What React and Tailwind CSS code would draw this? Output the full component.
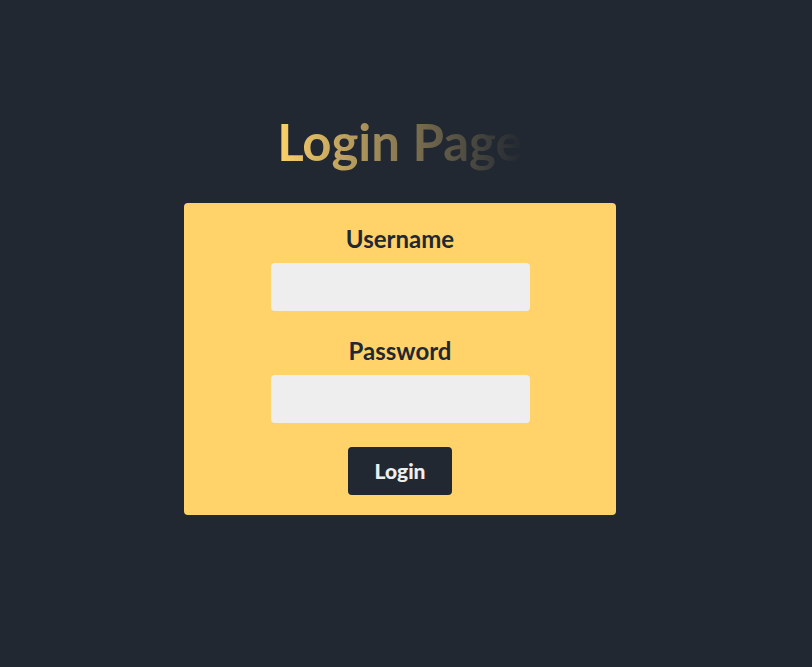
export default function App() {
    return (
        <div className="min-h-screen bg-[#222831] flex flex-col items-center pt-[111px] pr-[12px] font-['Lato','Open_Sans',sans-serif]">
            {/* Heading with fading gradient text */}
            <h1 className="inline-block text-[51px] leading-[62px] font-bold bg-gradient-to-r from-[#FFD369] to-[#222831] bg-clip-text text-transparent">
                Login Page
            </h1>

            <form
                onSubmit={(e) => e.preventDefault()}
                className="mt-[30px] w-[432px] bg-[#FFD369] rounded-[4px] flex flex-col items-center pt-[21px] pb-[20px]"
            >
                <label
                    htmlFor="username"
                    className="text-[24px] leading-[29px] font-bold text-[#222831]"
                >
                    Username
                </label>
                <input
                    id="username"
                    type="text"
                    className="mt-[10px] w-[259px] h-[48px] rounded-[4px] bg-[#EEEEEE] outline-none px-3"
                />

                <label
                    htmlFor="password"
                    className="mt-[25px] text-[24px] leading-[29px] font-bold text-[#222831]"
                >
                    Password
                </label>
                <input
                    id="password"
                    type="password"
                    className="mt-[10px] w-[259px] h-[48px] rounded-[4px] bg-[#EEEEEE] outline-none px-3"
                />

                <button
                    type="submit"
                    className="mt-[24px] w-[104px] h-[48px] rounded-[4px] bg-[#222831] text-[#EEEEEE] text-[21px] font-black"
                >
                    Login
                </button>
            </form>
        </div>
    );
}
